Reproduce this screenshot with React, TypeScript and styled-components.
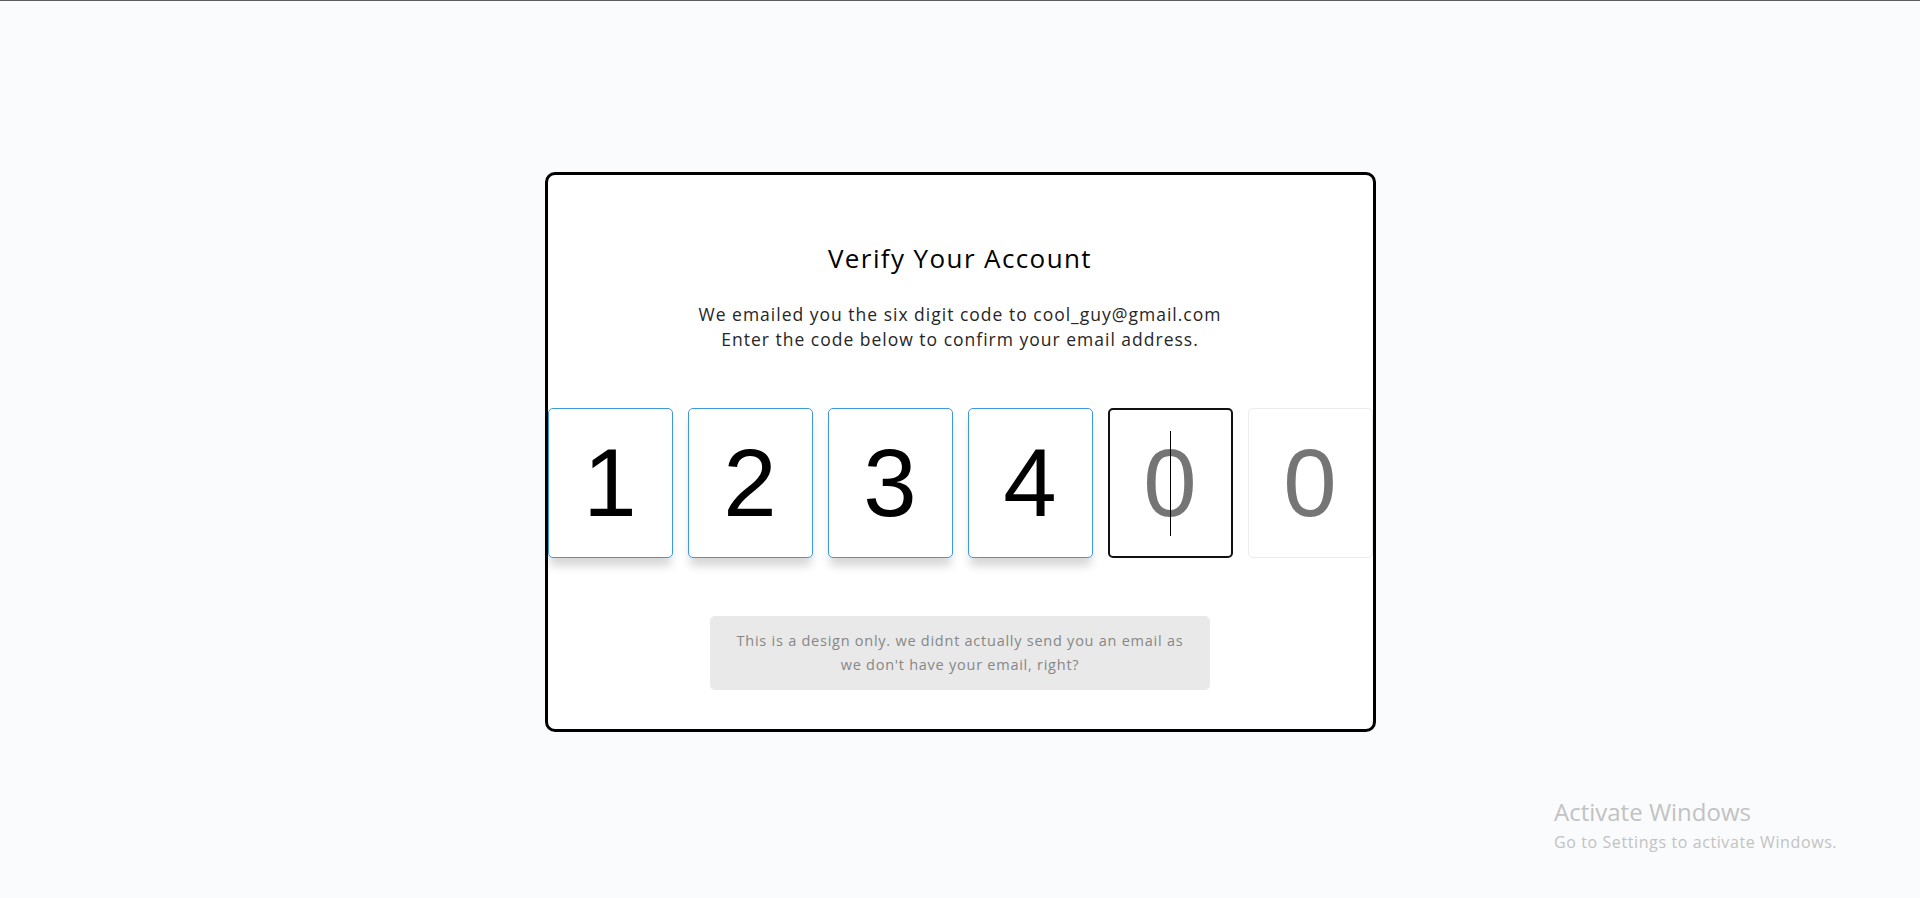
import React from "react";
import styled, { createGlobalStyle } from "styled-components";

const GlobalStyle = createGlobalStyle`
  *, *::before, *::after { box-sizing: border-box; }
  html, body { margin: 0; padding: 0; }
  body {
    background: #fafbfd;
    font-family: "Open Sans", "Noto Sans", sans-serif;
  }
`;

const Page = styled.main`
  min-height: 898px;
  border-top: 1px solid #5c5c5c;
  display: flex;
  justify-content: center;
  align-items: flex-start;
  padding-top: 171px;
  position: relative;
`;

const Card = styled.section`
  width: 831px;
  height: 560px;
  background: #ffffff;
  border: 3px solid #000;
  border-radius: 10px;
  display: flex;
  flex-direction: column;
  align-items: center;
  padding: 67px 0 39px;
`;

const Title = styled.h1`
  margin: 0;
  font-size: 26px;
  line-height: 32px;
  font-weight: 400;
  letter-spacing: 1.4px;
  color: #000;
`;

const Subtitle = styled.p`
  margin: 28px 0 0;
  font-size: 17.5px;
  line-height: 25px;
  font-weight: 400;
  letter-spacing: 1px;
  color: #262626;
  text-align: center;
`;

const CodeRow = styled.div`
  margin-top: 56px;
  display: flex;
  gap: 15px;
`;

const Cell = styled.div`
  position: relative;
  width: 125px;
  height: 150px;
`;

type Tone = "filled" | "active" | "empty";

const Digit = styled.input<{ $tone: Tone }>`
  width: 100%;
  height: 100%;
  margin: 0;
  padding: 0;
  outline: none;
  background: #fff;
  font-family: "Liberation Sans", Arial, sans-serif;
  font-size: 96px;
  color: #000;
  text-align: center;
  caret-color: transparent;
  border-radius: 5px;
  border: ${(p) =>
    p.$tone === "filled"
      ? "1px solid #3d98dd"
      : p.$tone === "active"
      ? "2px solid #111"
      : "1px solid #ececec"};
  box-shadow: ${(p) =>
    p.$tone === "filled" ? "0 10px 10px -2px rgba(0, 0, 0, 0.16)" : "none"};

  &::placeholder {
    color: #757575;
    opacity: 1;
  }
`;

const Caret = styled.span`
  position: absolute;
  left: 62px;
  top: 23px;
  width: 1px;
  height: 105px;
  background: #000;
`;

const Note = styled.p`
  margin: 58px 0 0;
  width: 500px;
  padding: 13px 22px;
  background: #e9e9e9;
  border-radius: 5px;
  font-size: 14.5px;
  line-height: 24px;
  font-weight: 400;
  letter-spacing: 0.75px;
  color: #878787;
  text-align: center;
`;

const Watermark = styled.div`
  position: absolute;
  left: 1554px;
  top: 796px;
  font-family: "Open Sans", "Noto Sans", sans-serif;
  color: #c2c2c2;
  pointer-events: none;
`;

const WatermarkTitle = styled.div`
  font-size: 24px;
  line-height: 30px;
`;

const WatermarkText = styled.div`
  font-size: 16px;
  line-height: 30px;
  letter-spacing: 0.6px;
`;

const digits: { value: string; tone: Tone }[] = [
  { value: "1", tone: "filled" },
  { value: "2", tone: "filled" },
  { value: "3", tone: "filled" },
  { value: "4", tone: "filled" },
  { value: "", tone: "active" },
  { value: "", tone: "empty" },
];

export default function App() {
  return (
    <>
      <GlobalStyle />
      <Page>
        <Card>
          <Title>Verify Your Account</Title>
          <Subtitle>
            We emailed you the six digit code to cool_guy@gmail.com
            <br />
            Enter the code below to confirm your email address.
          </Subtitle>
          <CodeRow>
            {digits.map((d, i) => (
              <Cell key={i}>
                <Digit
                  $tone={d.tone}
                  type="text"
                  maxLength={1}
                  defaultValue={d.value}
                  placeholder="0"
                  aria-label={`Digit ${i + 1}`}
                />
                {d.tone === "active" && <Caret />}
              </Cell>
            ))}
          </CodeRow>
          <Note>
            This is a design only. we didnt actually send you an email as we
            don't have your email, right?
          </Note>
        </Card>
        <Watermark>
          <WatermarkTitle>Activate Windows</WatermarkTitle>
          <WatermarkText>Go to Settings to activate Windows.</WatermarkText>
        </Watermark>
      </Page>
    </>
  );
}
